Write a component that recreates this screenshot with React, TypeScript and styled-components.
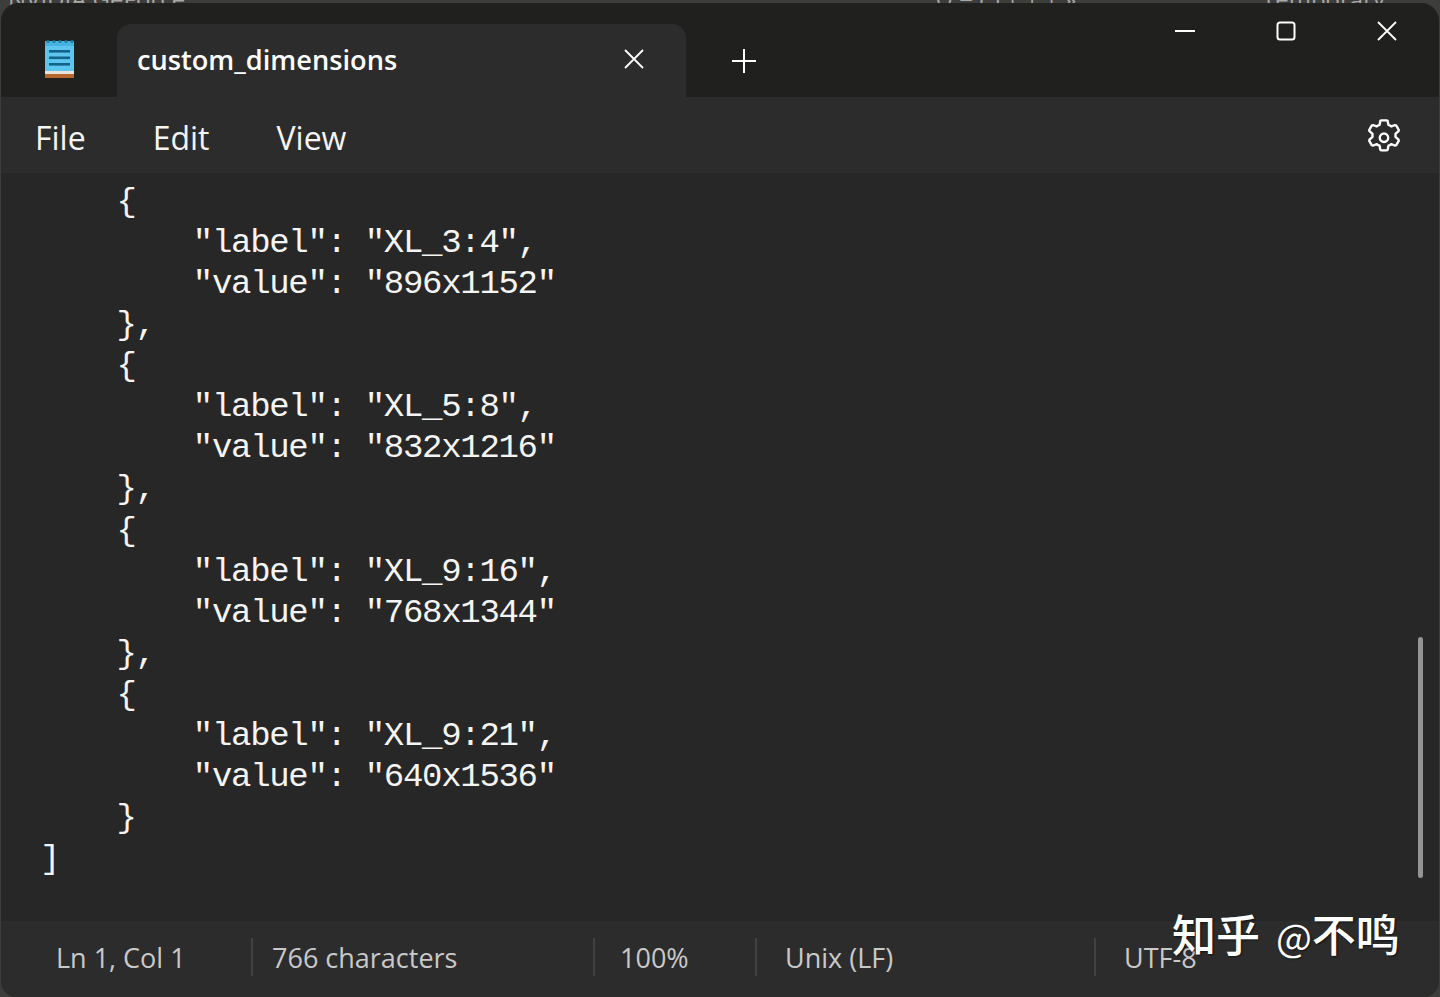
import React from "react";
import styled, { createGlobalStyle } from "styled-components";

const Global = createGlobalStyle`
  html, body { margin: 0; padding: 0; background: #3b3b3b; }
  #root { width: 1440px; height: 997px; overflow: hidden; }
`;

const uiFont = `"Open Sans", "Noto Sans", sans-serif`;

const Desktop = styled.div`
  position: relative;
  width: 1440px;
  height: 997px;
  overflow: hidden;
  background: #3d3d3b;
  padding-top: 3px;
  box-sizing: border-box;
`;

const BehindText = styled.div<{ $left: number }>`
  position: absolute;
  top: -18px;
  left: ${(p) => p.$left}px;
  font: 24px ${uiFont};
  color: #a8a8a8;
  white-space: nowrap;
`;

const Window = styled.div`
  position: relative;
  width: 1438px;
  height: 994px;
  margin-left: 1px;
  border-radius: 18px 18px 16px 16px;
  overflow: hidden;
  display: flex;
  flex-direction: column;
  background: #2c2c2c;
`;

const TitleBar = styled.div`
  height: 94px;
  flex: none;
  background: #20211f;
  display: flex;
  align-items: flex-end;
`;

const AppIconSlot = styled.div`
  width: 116px;
  height: 94px;
  flex: none;
  display: flex;
  align-items: center;
  padding-left: 43px;
  padding-top: 18px;
  box-sizing: border-box;
`;

const Tab = styled.div`
  width: 569px;
  height: 73px;
  flex: none;
  background: #2c2c2c;
  border-radius: 14px 14px 0 0;
  display: flex;
  align-items: center;
  justify-content: space-between;
  padding: 0 42px 3px 20px;
  box-sizing: border-box;
`;

const TabTitle = styled.span`
  font: 600 27.2px ${uiFont};
  color: #ffffff;
`;

const NewTab = styled.div`
  width: 116px;
  height: 73px;
  flex: none;
  display: flex;
  align-items: center;
  justify-content: center;
`;

const WindowControls = styled.div`
  margin-left: auto;
  align-self: flex-start;
  display: flex;
  align-items: center;
  gap: 81px;
  padding: 18px 42px 0 0;
`;

const MenuBar = styled.div`
  height: 76px;
  flex: none;
  box-sizing: border-box;
  display: flex;
  align-items: center;
  justify-content: space-between;
  padding: 4px 37px 0 34px;
  background: #2c2c2c;
`;

const MenuItems = styled.div`
  display: flex;
  gap: 67px;
`;

const MenuItem = styled.span`
  font: 400 32px ${uiFont};
  color: #f4f4f4;
`;

const Editor = styled.div`
  position: relative;
  flex: 1;
  background: #272727;
  padding: 9px 0 0 39px;
  overflow: hidden;
`;

const Code = styled.pre`
  margin: 0;
  font: 34px/41.06px "Liberation Mono", monospace;
  letter-spacing: -1.3px;
  color: #f4f4f4;
`;

const Scrollbar = styled.div`
  position: absolute;
  left: 1417px;
  top: 464px;
  width: 5px;
  height: 241px;
  border-radius: 3px;
  background: #949494;
`;

const StatusBar = styled.div`
  height: 76px;
  flex: none;
  box-sizing: border-box;
  display: flex;
  align-items: center;
  padding-bottom: 4px;
  background: #2c2c2c;
`;

const StatusCell = styled.div<{ $width: number; $pad: number; $first?: boolean }>`
  width: ${(p) => p.$width}px;
  height: 38px;
  flex: none;
  box-sizing: border-box;
  display: flex;
  align-items: center;
  padding-left: ${(p) => p.$pad}px;
  border-left: ${(p) => (p.$first ? "none" : "2px solid #414141")};
  font: 400 27px ${uiFont};
  color: #c9c9c9;
  white-space: nowrap;
`;

const Watermark = styled.div`
  position: absolute;
  left: 1172px;
  top: 901px;
  font: 500 44px "Noto Sans CJK SC", sans-serif;
  word-spacing: 6px;
  color: #ffffff;
  text-shadow: 1px 1px 2px rgba(0, 0, 0, 0.6);
  white-space: nowrap;
`;

const WatermarkAt = styled.span`
  font-size: 38px;
  font-weight: 400;
`;

const code = `    {
        "label": "XL_3:4",
        "value": "896x1152"
    },
    {
        "label": "XL_5:8",
        "value": "832x1216"
    },
    {
        "label": "XL_9:16",
        "value": "768x1344"
    },
    {
        "label": "XL_9:21",
        "value": "640x1536"
    }
]`;

const NotepadIcon = () => (
  <svg width="32" height="40" viewBox="0 0 32 40">
    <rect x="1" y="2" width="29" height="33" fill="#5cc6ee" />
    <rect x="1" y="2" width="29" height="5" fill="#47b3de" />
    <circle cx="4" cy="2.5" r="1.6" fill="#1f7fa8" />
    <circle cx="10" cy="2.5" r="1.6" fill="#1f7fa8" />
    <circle cx="16" cy="2.5" r="1.6" fill="#1f7fa8" />
    <circle cx="22" cy="2.5" r="1.6" fill="#1f7fa8" />
    <circle cx="28" cy="2.5" r="1.6" fill="#1f7fa8" />
    <rect x="5" y="11" width="21" height="2.6" fill="#14618a" />
    <rect x="5" y="17.5" width="21" height="2.6" fill="#14618a" />
    <rect x="5" y="24" width="21" height="2.6" fill="#14618a" />
    <rect x="1" y="32" width="29" height="3" fill="#e8e4dc" />
    <rect x="1" y="35" width="29" height="4" fill="#b5672e" />
  </svg>
);

const CloseIcon = ({ size }: { size: number }) => (
  <svg width={size} height={size} viewBox="0 0 20 20" fill="none" stroke="#fff" strokeWidth="1.8">
    <path d="M1 1 L19 19 M19 1 L1 19" />
  </svg>
);

const PlusIcon = () => (
  <svg width="24" height="24" viewBox="0 0 24 24" fill="none" stroke="#fff" strokeWidth="2">
    <path d="M12 0 V24 M0 12 H24" />
  </svg>
);

const MinIcon = () => (
  <svg width="20" height="20" viewBox="0 0 20 20" fill="none" stroke="#fff" strokeWidth="2">
    <path d="M0 10 H20" />
  </svg>
);

const MaxIcon = () => (
  <svg width="20" height="20" viewBox="0 0 20 20" fill="none" stroke="#fff" strokeWidth="2">
    <rect x="1.5" y="1.5" width="17" height="17" rx="2.5" />
  </svg>
);

const GearIcon = () => (
  <svg width="36" height="36" viewBox="2.6 2.2 18.8 18.8" fill="none" stroke="#fff" strokeWidth="1.25" strokeLinecap="round" strokeLinejoin="round">
    <path d="M9.67 3.7 10.1 1.6a.9.9 0 0 1 .6-.3h2.6a.9.9 0 0 1 .6.3l.43 2.1c.5.17.97.44 1.4.78l2.04-.68a.9.9 0 0 1 .62.2l1.3 2.25a.9.9 0 0 1-.1.65l-1.6 1.42a6.6 6.6 0 0 1 0 1.62l1.6 1.42a.9.9 0 0 1 .1.65l-1.3 2.25a.9.9 0 0 1-.62.2l-2.04-.68c-.43.34-.9.6-1.4.78l-.43 2.1a.9.9 0 0 1-.6.3h-2.6a.9.9 0 0 1-.6-.3l-.43-2.1a6.6 6.6 0 0 1-1.4-.78l-2.04.68a.9.9 0 0 1-.62-.2l-1.3-2.25a.9.9 0 0 1 .1-.65l1.6-1.42a6.6 6.6 0 0 1 0-1.62l-1.6-1.42a.9.9 0 0 1-.1-.65l1.3-2.25a.9.9 0 0 1 .62-.2l2.04.68c.43-.34.9-.6 1.4-.78Z" transform="translate(0 1.6)" />
    <circle cx="12" cy="12" r="2.2" />
  </svg>
);

export default function App() {
  return (
    <Desktop>
      <Global />
      <BehindText $left={8}>NVIDIA GeForce</BehindText>
      <BehindText $left={935}>{"⟨⟩ ≡ ( ) | | | »"}</BehindText>
      <BehindText $left={1262}>Temporary</BehindText>
      <Window>
        <TitleBar>
          <AppIconSlot>
            <NotepadIcon />
          </AppIconSlot>
          <Tab>
            <TabTitle>custom_dimensions</TabTitle>
            <CloseIcon size={20} />
          </Tab>
          <NewTab>
            <PlusIcon />
          </NewTab>
          <WindowControls>
            <MinIcon />
            <MaxIcon />
            <CloseIcon size={20} />
          </WindowControls>
        </TitleBar>
        <MenuBar>
          <MenuItems>
            <MenuItem>File</MenuItem>
            <MenuItem>Edit</MenuItem>
            <MenuItem>View</MenuItem>
          </MenuItems>
          <GearIcon />
        </MenuBar>
        <Editor>
          <Code>{code}</Code>
          <Scrollbar />
        </Editor>
        <StatusBar>
          <StatusCell $first $width={250} $pad={55}>Ln 1, Col 1</StatusCell>
          <StatusCell $width={342} $pad={19}>766 characters</StatusCell>
          <StatusCell $width={162} $pad={25}>100%</StatusCell>
          <StatusCell $width={339} $pad={28}>Unix (LF)</StatusCell>
          <StatusCell $width={300} $pad={28}>UTF-8</StatusCell>
        </StatusBar>
      </Window>
      <Watermark>知乎 <WatermarkAt>@</WatermarkAt>不鸣</Watermark>
    </Desktop>
  );
}
